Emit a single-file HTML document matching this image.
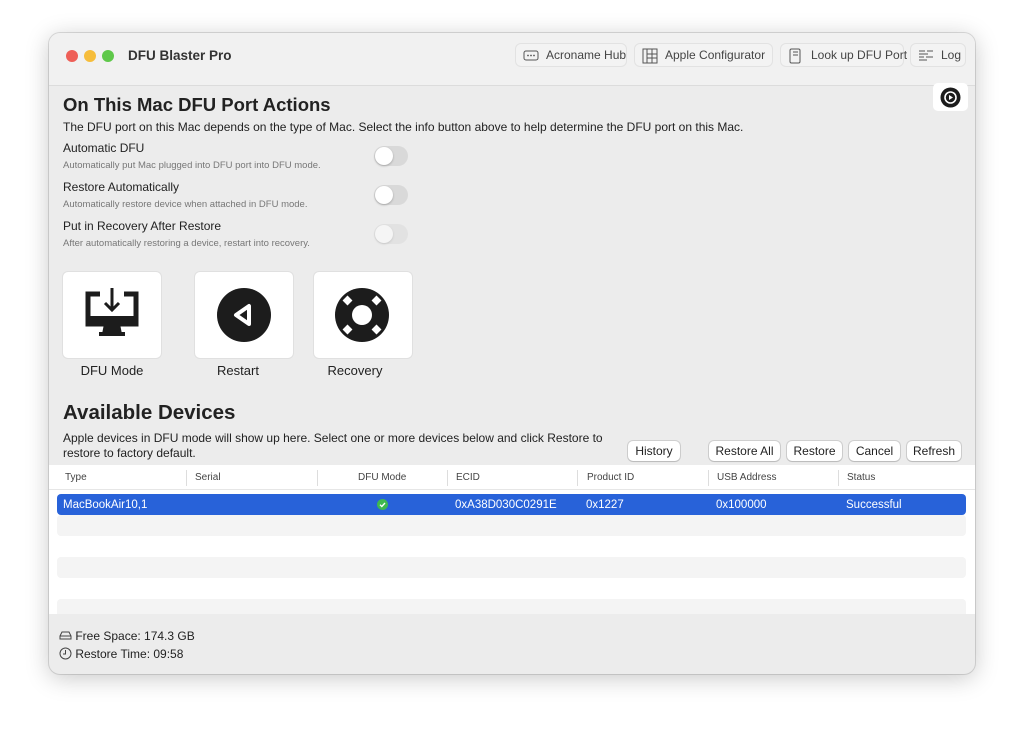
<!DOCTYPE html>
<html><head><style>
*{margin:0;padding:0;box-sizing:border-box}
body{width:1024px;height:739px;background:#fff;font-family:"Liberation Sans",sans-serif;position:relative;overflow:hidden;color:#222}
.a{position:absolute;white-space:nowrap}
.win{left:49px;top:33px;width:926px;height:641px;border-radius:11px;background:#ececec;box-shadow:0 4px 24px rgba(0,0,0,.22),0 0 0 1px rgba(0,0,0,.12);overflow:hidden}
.tb{left:0;top:0;width:926px;height:53px;background:#f1f1f1;border-bottom:1px solid #dcdcdc}
.dot{width:12px;height:12px;border-radius:6px;top:17px}
.tbtn{top:10px;height:24px;border:1px solid #e2e2e2;border-radius:6px;background:#f3f3f3;font-size:12px;color:#444;line-height:22px;padding-left:30px;padding-right:6px}
.tbtn svg{position:absolute;left:7px;top:4px}
.sm{font-size:12px;color:#222}
.xs{font-size:9.5px;color:#777}
.tog{width:34px;height:20px;border-radius:10px;background:#d9d9d9}
.tog:after{content:"";position:absolute;left:1px;top:1px;width:18px;height:18px;border-radius:9px;background:#fff;box-shadow:0 1px 2px rgba(0,0,0,.25)}
.card{width:98px;height:86px;background:#fff;border-radius:5px;box-shadow:0 0 0 1px rgba(0,0,0,.05)}
.lbl{font-size:13px;color:#222;text-align:center;width:98px}
.btn{top:408px;height:20px;background:#fff;border-radius:5px;box-shadow:0 0 0 1px rgba(0,0,0,.12),0 1px 1px rgba(0,0,0,.1);font-size:12px;line-height:20px;text-align:center}
.th{top:439px;font-size:10px;color:#444}
.sep{top:437px;width:1px;height:16px;background:#ddd}
.td{top:466px;font-size:11.5px;color:#fff}
</style></head><body>
<div class="a win">
 <div class="a tb"></div>
 <div class="a dot" style="left:17px;background:#ee5f57"></div>
 <div class="a dot" style="left:35px;background:#f6bd3b"></div>
 <div class="a dot" style="left:53px;background:#5fc84a"></div>
 <div class="a" style="left:79px;top:15px;font-size:13.5px;font-weight:bold;color:#333">DFU Blaster Pro</div>
 <div class="a tbtn" style="left:466px;width:112px"><svg width="16" height="14"><rect x="1" y="3" width="14" height="9" rx="2" fill="none" stroke="#555"/><circle cx="5" cy="7.5" r=".9" fill="#555"/><circle cx="8" cy="7.5" r=".9" fill="#555"/><circle cx="11" cy="7.5" r=".9" fill="#555"/></svg>Acroname Hub</div>
 <div class="a tbtn" style="left:585px;width:139px"><svg width="16" height="16"><rect x="1" y="1" width="14" height="14" fill="none" stroke="#555"/><path d="M5 1v14M10 1v14M5 6h10M5 10h10" stroke="#555"/></svg>Apple Configurator</div>
 <div class="a tbtn" style="left:731px;width:124px"><svg width="14" height="16"><rect x="2" y="1" width="10" height="14" rx="1.5" fill="none" stroke="#555"/><path d="M5 4h5M5 7h5" stroke="#555"/></svg>Look up DFU Port</div>
 <div class="a tbtn" style="left:861px;width:56px"><svg width="16" height="14"><path d="M1 3h6M9 3h6M1 6h9M1 9h5M8 9h7M1 12h8" stroke="#555"/></svg>Log</div>
 <div class="a" style="left:884px;top:50px;width:35px;height:28px;background:#fff;border-radius:5px"><svg class="a" style="left:7px;top:4px" width="21" height="21"><circle cx="10.5" cy="10.5" r="10" fill="#1c1c1c"/><circle cx="10.5" cy="10.5" r="5.5" fill="none" stroke="#fff" stroke-width="1.6"/><path d="M9 8l4 2.5-4 2.5z" fill="#fff"/></svg></div>

 <div class="a" style="left:14px;top:61px;font-size:18.5px;font-weight:bold;color:#222">On This Mac DFU Port Actions</div>
 <div class="a sm" style="left:14px;top:87px">The DFU port on this Mac depends on the type of Mac. Select the info button above to help determine the DFU port on this Mac.</div>
 <div class="a sm" style="left:14px;top:108px">Automatic DFU</div>
 <div class="a xs" style="left:14px;top:127px">Automatically put Mac plugged into DFU port into DFU mode.</div>
 <div class="a tog" style="left:325px;top:113px"></div>
 <div class="a sm" style="left:14px;top:147px">Restore Automatically</div>
 <div class="a xs" style="left:14px;top:166px">Automatically restore device when attached in DFU mode.</div>
 <div class="a tog" style="left:325px;top:152px"></div>
 <div class="a sm" style="left:14px;top:186px">Put in Recovery After Restore</div>
 <div class="a xs" style="left:14px;top:205px">After automatically restoring a device, restart into recovery.</div>
 <div class="a tog" style="left:325px;top:191px;opacity:.5"></div>

 <div class="a card" style="left:14px;top:239px"><svg class="a" style="left:21px;top:14px" width="56" height="56"><path d="M16 8H4v30h48V8H40" fill="none" stroke="#1c1c1c" stroke-width="5"/><rect x="4" y="30" width="48" height="8" fill="#1c1c1c"/><path d="M20 38h16l2 10H18z" fill="#1c1c1c"/><rect x="15" y="46" width="26" height="4" fill="#1c1c1c"/><path d="M28 2v22M21 17l7 7 7-7" fill="none" stroke="#1c1c1c" stroke-width="3"/></svg></div>
 <div class="a lbl" style="left:14px;top:330px">DFU Mode</div>
 <div class="a card" style="left:146px;top:239px"><svg class="a" style="left:21px;top:15px" width="56" height="56"><circle cx="28" cy="28" r="27" fill="#1c1c1c"/><path d="M33 19v18L20 28z" fill="none" stroke="#fff" stroke-width="4" stroke-linejoin="round"/></svg></div>
 <div class="a lbl" style="left:140px;top:330px">Restart</div>
 <div class="a card" style="left:265px;top:239px"><svg class="a" style="left:20px;top:15px" width="56" height="56"><circle cx="28" cy="28" r="27" fill="#1c1c1c"/><circle cx="28" cy="28" r="10" fill="#fff"/><g fill="#fff"><rect x="10" y="10" width="7" height="7" transform="rotate(45 13.5 13.5)"/><rect x="39" y="10" width="7" height="7" transform="rotate(45 42.5 13.5)"/><rect x="10" y="39" width="7" height="7" transform="rotate(45 13.5 42.5)"/><rect x="39" y="39" width="7" height="7" transform="rotate(45 42.5 42.5)"/></g></svg></div>
 <div class="a lbl" style="left:257px;top:330px">Recovery</div>

 <div class="a" style="left:14px;top:368px;font-size:20.5px;font-weight:bold;color:#222">Available Devices</div>
 <div class="a sm" style="left:14px;top:398px;width:545px;line-height:15px;white-space:normal">Apple devices in DFU mode will show up here. Select one or more devices below and click Restore to restore to factory default.</div>
 <div class="a btn" style="left:579px;width:52px">History</div>
 <div class="a btn" style="left:660px;width:71px">Restore All</div>
 <div class="a btn" style="left:738px;width:55px">Restore</div>
 <div class="a btn" style="left:800px;width:51px">Cancel</div>
 <div class="a btn" style="left:858px;width:54px">Refresh</div>

 <div class="a" style="left:0;top:432px;width:926px;height:149px;background:#fff"></div>
 <div class="a" style="left:0;top:456px;width:926px;height:1px;background:#e6e6e6"></div>
 <div class="a th" style="left:16px">Type</div>
 <div class="a sep" style="left:137px"></div>
 <div class="a th" style="left:146px">Serial</div>
 <div class="a sep" style="left:268px"></div>
 <div class="a th" style="left:309px">DFU Mode</div>
 <div class="a sep" style="left:398px"></div>
 <div class="a th" style="left:407px">ECID</div>
 <div class="a sep" style="left:528px"></div>
 <div class="a th" style="left:538px">Product ID</div>
 <div class="a sep" style="left:659px"></div>
 <div class="a th" style="left:668px">USB Address</div>
 <div class="a sep" style="left:789px"></div>
 <div class="a th" style="left:798px">Status</div>
 <div class="a" style="left:8px;top:461px;width:909px;height:21px;background:#2862d9;border-radius:4px"></div>
 <div class="a" style="left:8px;top:482px;width:909px;height:21px;background:#f4f4f4;border-radius:4px"></div>
 <div class="a" style="left:8px;top:524px;width:909px;height:21px;background:#f4f4f4;border-radius:4px"></div>
 <div class="a" style="left:8px;top:566px;width:909px;height:15px;background:#f4f4f4;border-radius:4px 4px 0 0"></div>
 <div class="a td" style="left:14px">MacBookAir10,1</div>
 <svg class="a" style="left:328px;top:466px" width="11" height="11"><circle cx="5.5" cy="5.5" r="5.5" fill="#3fb94f"/><path d="M3 5.7l1.8 1.8L8 4" fill="none" stroke="#fff" stroke-width="1.3"/></svg>
 <div class="a td" style="left:406px">0xA38D030C0291E</div>
 <div class="a td" style="left:537px">0x1227</div>
 <div class="a td" style="left:667px">0x100000</div>
 <div class="a td" style="left:797px">Successful</div>

 <div class="a sm" style="left:10px;top:596px"><svg width="13" height="11" style="vertical-align:-1px"><path d="M1 6l2-4h7l2 4v3H1z" fill="none" stroke="#444"/><path d="M1 6h11" stroke="#444"/></svg> Free Space: 174.3 GB</div>
 <div class="a sm" style="left:10px;top:614px"><svg width="13" height="13" style="vertical-align:-2px"><circle cx="6.5" cy="6.5" r="5.5" fill="none" stroke="#444"/><path d="M6.5 3v4H4" fill="none" stroke="#444"/></svg> Restore Time: 09:58</div>
</div>
</body></html>
